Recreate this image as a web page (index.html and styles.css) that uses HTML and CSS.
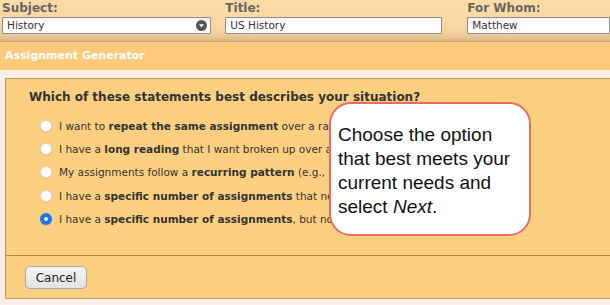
FILE: index.html
```html
<!DOCTYPE html>
<html lang="en">

<head>
    <meta charset="UTF-8">
    <meta name="viewport" content="width=device-width, initial-scale=1.0">
    <title>Assignment Generator</title>
    <link rel="stylesheet" href="styles.css">
</head>

<body>
    <div class="topbar">
        <div class="field subject">
            <label>Subject:</label>
            <div class="box">History
                <span class="drop">
                    <svg width="11" height="11" viewBox="0 0 11 11">
                        <circle cx="5.5" cy="5.5" r="5.5" fill="#555" />
                        <path d="M3 4.3 L8 4.3 L5.5 7.6 Z" fill="#fff" />
                    </svg>
                </span>
            </div>
        </div>
        <div class="field title">
            <label>Title:</label>
            <div class="box">US History</div>
        </div>
        <div class="field whom">
            <label>For Whom:</label>
            <div class="box">Matthew</div>
        </div>
    </div>

    <div class="gen-head">Assignment Generator</div>
    <div class="gen-gap"></div>

    <div class="panel">
        <div class="question">
            <h2>Which of these statements best describes your situation?</h2>
            <ul class="options">
                <li><span class="radio"></span><span class="opt">I want to <b>repeat the same assignment</b> over a range of dates (e.g., <i>make the bed</i>).</span></li>
                <li><span class="radio"></span><span class="opt">I have a <b>long reading</b> that I want broken up over a range of dates.</span></li>
                <li><span class="radio"></span><span class="opt">My assignments follow a <b>recurring pattern</b> (e.g., <i>1-a, 1-b, 1-c, 2-a, 2-b, 2-c, etc.</i>).</span></li>
                <li><span class="radio"></span><span class="opt">I have a <b>specific number of assignments</b> that need to be done by a <b>date</b>.</span></li>
                <li><span class="radio checked"></span><span class="opt">I have a <b>specific number of assignments</b>, but no due date.</span></li>
            </ul>
        </div>
        <div class="footer">
            <button class="btn">Cancel</button>
        </div>
    </div>

    <div class="callout">Choose the option that best meets your current needs and select <i>Next</i>.</div>
</body>

</html>
```

FILE: styles.css
```css
* {
    margin: 0;
    padding: 0;
    box-sizing: border-box;
}

body {
    background-color: #fdefe7;
    font-family: "DejaVu Sans", Verdana, sans-serif;
    overflow: hidden;
}

.topbar {
    display: flex;
    height: 42px;
    padding: 1px 0 0 2px;
    background: linear-gradient(#fddba5, #f8d6a2 70%, #e8c590 92%, #d4b083);
    border-bottom: 1px solid #c9a677;
}

.field label {
    display: block;
    height: 16px;
    font-size: 12px;
    font-weight: bold;
    color: #666;
    line-height: 14px;
}

.box {
    position: relative;
    height: 17px;
    padding-left: 4px;
    font-size: 10.5px;
    line-height: 15px;
    color: #333;
    background: linear-gradient(#f4f4f4, #fff 40%);
    border: 1px solid #8d8d8d;
    border-radius: 1px;
}

.subject {
    width: 220px;
}

.title {
    width: 228px;
    margin-left: 14px;
}

.whom {
    width: 150px;
    margin-left: 25px;
}

.drop {
    position: absolute;
    right: 3px;
    top: 2px;
    line-height: 0;
}

.gen-head {
    height: 28px;
    padding-left: 5px;
    background-color: #fdc97b;
    color: #fff;
    font-size: 11px;
    font-weight: bold;
    line-height: 28px;
}

.gen-gap {
    height: 8px;
}

.panel {
    margin-left: 5px;
    width: 620px;
    height: 221px;
    background-color: #fdcf81;
    border: 1px solid #c49a52;
}

.question {
    height: 177px;
    padding: 9px 0 0 23px;
    border-bottom: 1px solid #b88d3f;
}

.question h2 {
    font-size: 12px;
    color: #333;
    line-height: 18px;
}

ul,
li {
    list-style: none;
}

.options {
    margin-top: 8px;
    padding-left: 11px;
}

.options li {
    display: flex;
    align-items: center;
    height: 23.3px;
    font-size: 10.5px;
    color: #333;
    white-space: nowrap;
}

.radio {
    flex: none;
    width: 12px;
    height: 12px;
    margin-right: 7px;
    border-radius: 50%;
    background-color: #fff;
    border: 1px solid #e6d7c0;
    box-shadow: 0 1px 1px rgba(0, 0, 0, 0.1);
}

.radio.checked {
    border: 4px solid #1476f2;
    background-color: #fff;
}

.footer {
    padding: 10px 0 0 19px;
}

.btn {
    width: 62px;
    height: 23px;
    font-family: "DejaVu Sans", Verdana, sans-serif;
    font-size: 12px;
    color: #222;
    background: linear-gradient(#f4f4f4, #e3e3e3);
    border: 1px solid #a8a8a8;
    border-radius: 5px;
}

.callout {
    position: absolute;
    left: 329px;
    top: 102px;
    width: 202px;
    height: 134px;
    padding: 19px 8px 0 7px;
    background-color: #fff;
    border: 2px solid #eb6b60;
    border-radius: 22px;
    font-family: "Liberation Sans", Arial, sans-serif;
    font-size: 19px;
    line-height: 24px;
    color: #111;
}
```
